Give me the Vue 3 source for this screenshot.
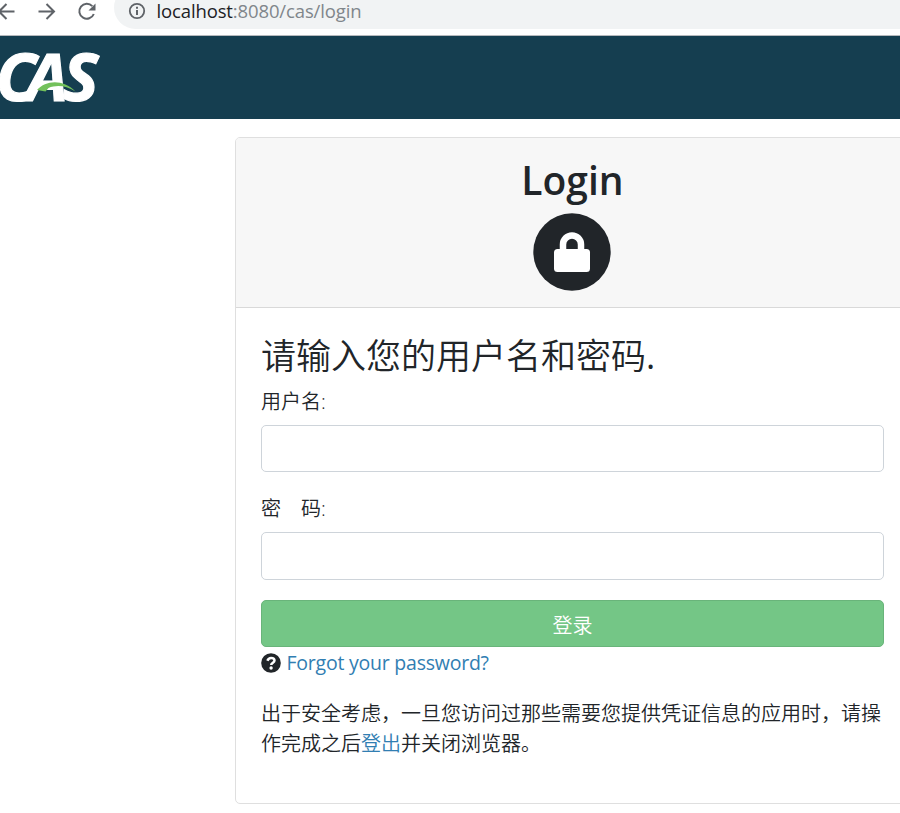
<script setup>
import { ref } from 'vue'

const username = ref('')
const password = ref('')
</script>

<template>
  <div class="page">
    <div class="toolbar">
      <svg class="nav" width="114" height="35" viewBox="0 0 114 35" fill="none" stroke="#5f6368" stroke-width="2">
        <path d="M14.500 11.500H0M6.500 4L-1 11.500L6.500 19" />
        <path d="M38.500 11.500H53M46.500 4L54 11.500L46.500 19" />
        <path d="M92.300 6.100A7.500 7.500 0 1 0 93.800 14" />
        <path d="M95.500 3.500V10.500H88.500Z" fill="#5f6368" stroke="none" />
      </svg>
      <div class="address">
        <svg width="18" height="18" viewBox="0 0 18 18">
          <circle cx="9" cy="9" r="7.200" fill="none" stroke="#5f6368" stroke-width="1.800" />
          <path d="M8 4.800h2v2H8zM8 8h2v5H8z" fill="#5f6368" />
        </svg>
        <span class="url"><span class="host">localhost</span>:8080/cas/login</span>
      </div>
    </div>

    <header class="banner">
      <svg class="logo" width="110" height="83" viewBox="0 0 110 83">
        <text class="letters" x="-4.500 26 63" y="65">CAS</text>
        <path d="M37 54C46 44 63 43 75.500 55.500C65 49 56 49 48.500 52L45.500 55.500Z" fill="#73c15b" />
      </svg>
    </header>

    <main class="card">
      <div class="card-header">
        <h1><span class="title">Login</span></h1>
        <svg class="lock" width="78" height="78" viewBox="0 0 78 78">
          <circle cx="39" cy="39" r="38.700" fill="#212529" />
          <path d="M30 38V31.500a9 9 0 0 1 18 0V38" fill="none" stroke="#fff" stroke-width="6.500" />
          <rect x="21" y="36" width="36" height="23" rx="3.500" fill="#fff" />
        </svg>
      </div>
      <form class="card-body" @submit.prevent>
        <h3>请输入您的用户名和密码<span class="stop">.</span></h3>
        <label for="username">用户名:</label>
        <input id="username" v-model="username" type="text" />
        <label class="second" for="password">密　码:</label>
        <input id="password" v-model="password" class="tall" type="password" />
        <button type="submit">登录</button>
        <div class="forgot">
          <svg width="20" height="20" viewBox="0 0 20 20">
            <circle cx="10" cy="10" r="9.800" fill="#212529" />
            <path d="M6.400 7.800C7.200 5.700 8.400 4.900 10.100 4.900C12.100 4.900 13.500 6.100 13.500 7.600C13.500 9.700 10.200 9.700 10.200 12" fill="none" stroke="#fff" stroke-width="2.500" />
            <circle cx="10.100" cy="15" r="1.700" fill="#fff" />
          </svg>
          <a class="forgot-text" href="#">Forgot your password?</a>
        </div>
        <p>出于安全考虑，一旦您访问过那些需要您提供凭证信息的应用时，请操<br />作完成之后<a href="#">登出</a>并关闭浏览器。</p>
      </form>
    </main>
  </div>
</template>

<style>
body {
  background: #fff;
  overflow: hidden;
}
</style>

<style scoped>
* {
  box-sizing: border-box;
}
.page {
  width: 900px;
  height: 813px;
  overflow: hidden;
  color: #212529;
  font-family: "Open Sans", "Noto Sans CJK SC", sans-serif;
  font-size: 20px;
  line-height: 30px;
}
.toolbar {
  display: flex;
  height: 36px;
  border-bottom: 1px solid #b6b9bd;
}
.nav {
  flex: none;
}
.address {
  display: flex;
  align-items: center;
  gap: 11px;
  width: 820px;
  height: 43px;
  margin-top: -14px;
  padding: 7px 0 0 13.5px;
  flex: none;
  border-radius: 22px;
  background: #f1f3f4;
}
.url {
  color: #80868b;
  font-size: 18.5px;
  line-height: 22px;
  letter-spacing: -0.13px;
  white-space: nowrap;
}
.host {
  color: #202124;
}
.banner {
  height: 83px;
  background: #153e50;
}
.logo {
  display: block;
}
.letters {
  fill: #fff;
  stroke: #fff;
  stroke-width: 1.2px;
  font-family: "Open Sans", sans-serif;
  font-size: 67px;
  font-weight: 700;
  font-style: italic;
}
.card {
  width: 675px;
  height: 667px;
  margin: 18px 0 0 235px;
  border: 1px solid #dfdfdf;
  border-radius: 5px;
  background: #fff;
}
.card-header {
  display: flex;
  flex-direction: column;
  align-items: center;
  height: 170px;
  padding-top: 15px;
  border-bottom: 1px solid #d9d9d9;
  border-radius: 4px 4px 0 0;
  background: #f7f7f7;
}
h1 {
  height: 60px;
  margin: 0;
  font-size: 39px;
  font-weight: 600;
  line-height: 54px;
}
.lock {
  margin-right: 1px;
}
.card-body {
  display: flex;
  flex-direction: column;
  padding: 26px 25px 25px;
}
h3 {
  margin: 0 0 9px;
  font-size: 35px;
  font-weight: 350;
  line-height: 44px;
  white-space: nowrap;
}
.stop {
  font-weight: 500;
}
label {
  height: 30px;
  margin-bottom: 8px;
  font-weight: 350;
}
label.second {
  margin-top: 22px;
}
input {
  width: 623px;
  height: 47px;
  padding: 8px 15px;
  border: 1px solid #ced4da;
  border-radius: 5px;
  outline: none;
  font: inherit;
}
input.tall {
  height: 48px;
}
button {
  width: 623px;
  height: 47px;
  margin-top: 20px;
  padding: 4px 0 0;
  border: 1px solid #69b47a;
  border-radius: 5px;
  background: #74c686;
  color: #fff;
  font: inherit;
  font-weight: 350;
}
.forgot {
  display: flex;
  align-items: center;
  gap: 5.5px;
  height: 31px;
}
.forgot-text {
  font-size: 19.5px;
  letter-spacing: -0.23px;
}
a {
  color: #317eb2;
  text-decoration: none;
}
p {
  margin: 21px 0 0;
  font-weight: 350;
  white-space: nowrap;
}
</style>
